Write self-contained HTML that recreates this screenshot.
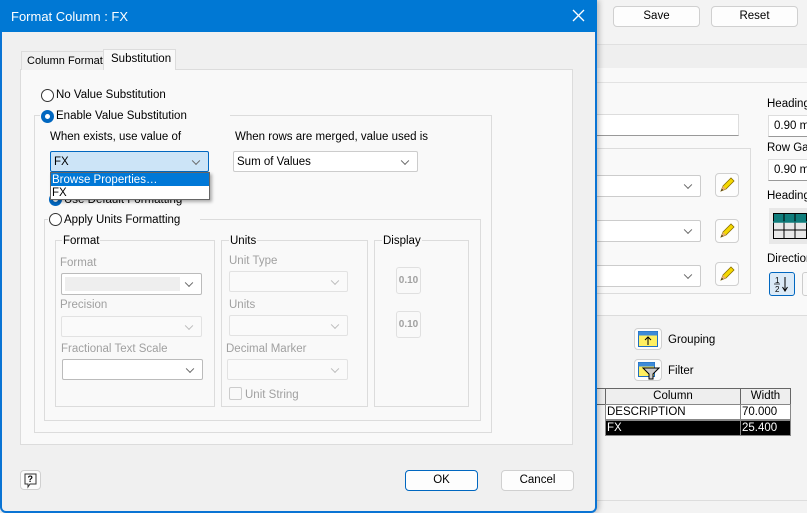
<!DOCTYPE html>
<html><head><style>
*{box-sizing:border-box;margin:0;padding:0;white-space:nowrap}
body{width:807px;height:513px;overflow:hidden;background:#f3f3f3;font-family:"Liberation Sans",sans-serif;font-size:11.5px;color:#000;position:relative}
.a{position:absolute}
.btn{position:absolute;background:#fdfdfd;border:1px solid #d0d0d0;border-radius:4px;text-align:center}
.dd{position:absolute;background:#fff;border:1px solid #ccc;border-radius:2px}
.dd:after{content:"";position:absolute;right:9px;top:50%;width:5px;height:5px;border-right:1px solid #666;border-bottom:1px solid #666;transform:translateY(-70%) rotate(45deg)}
.dis{border-color:#e2e2e2;background:#fafafa}
.dis:after{border-color:#bbb}
.gb{position:absolute;border:1px solid #dcdcdc}
.gt{position:absolute;background:#f9f9f9;padding:0 1px}
.radio{position:absolute;width:13px;height:13px;border:1px solid #333;border-radius:50%;background:#fff}
.radio.on{background:#0067c0;border-color:#0067c0}
.radio.on:after{content:"";position:absolute;left:3px;top:3px;width:5px;height:5px;border-radius:50%;background:#fff}
.g{color:#a0a0a0}
</style></head><body>
<svg width="0" height="0" style="position:absolute"><defs><g id="pen"><path d="M4 16L6 11L14 3L17 6L9 14Z" fill="#f5d800" stroke="#8a7000" stroke-width=".8"/><path d="M4 16L6 11L9 14Z" fill="#e8b070"/><path d="M4 16L5 14L6 15Z" fill="#000"/></g></defs></svg>
<div class="a" style="left:596px;top:0;width:211px;height:44px;background:#f3f3f3"></div>
<div class="btn" style="left:613px;top:6px;width:87px;height:21px;line-height:19px">Save</div>
<div class="btn" style="left:711px;top:6px;width:87px;height:21px;line-height:19px">Reset</div>
<div class="a" style="left:596px;top:44px;width:211px;height:1px;background:#e0e0e0"></div>
<div class="a" style="left:596px;top:45px;width:211px;height:23px;background:#efefef"></div>
<div class="a" style="left:596px;top:68px;width:211px;height:247px;background:#f9f9f9"></div>
<div class="a" style="left:596px;top:82px;width:211px;height:1px;background:#e3e3e3"></div>
<div class="a" style="left:596px;top:114px;width:143px;height:22px;background:#fff;border:1px solid #ddd;border-bottom-color:#999"></div>
<div class="gb" style="left:590px;top:148px;width:161px;height:146px"></div>
<div class="dd" style="left:590px;top:175px;width:111px;height:22px"></div>
<div class="dd" style="left:590px;top:220px;width:111px;height:22px"></div>
<div class="dd" style="left:590px;top:265px;width:111px;height:22px"></div>
<div class="btn" style="left:715px;top:173px;width:24px;height:24px"><svg width="20" height="20" style="margin-top:1px"><use href="#pen"/></svg></div>
<div class="btn" style="left:715px;top:219px;width:24px;height:24px"><svg width="20" height="20" style="margin-top:1px"><use href="#pen"/></svg></div>
<div class="btn" style="left:715px;top:262px;width:24px;height:24px"><svg width="20" height="20" style="margin-top:1px"><use href="#pen"/></svg></div>
<div class="a" style="left:767px;top:98px">Heading</div>
<div class="a" style="left:768px;top:115px;width:50px;height:22px;background:#fff;border:1px solid #ddd;border-bottom-color:#999;padding:4px 5px">0.90 m</div>
<div class="a" style="left:767px;top:142px">Row Gap</div>
<div class="a" style="left:768px;top:159px;width:50px;height:22px;background:#fff;border:1px solid #ddd;border-bottom-color:#999;padding:4px 5px">0.90 m</div>
<div class="a" style="left:767px;top:190px">Heading</div>
<div class="a" style="left:769px;top:208px;width:40px;height:36px;background:#e8e8e8"></div>
<svg class="a" style="left:773px;top:213px" width="34" height="27"><rect x="0.5" y="0.5" width="33" height="8" fill="#0e7c7b"/><rect x="0.5" y="0.5" width="33" height="25" fill="none" stroke="#000"/><path d="M11 0V26M22 0V26M0 17H34" stroke="#000"/><path d="M0 9H34" stroke="#0e7c7b" stroke-width="1.5"/></svg>
<div class="a" style="left:767px;top:253px">Direction</div>
<div class="a" style="left:769px;top:272px;width:26px;height:24px;background:#dbeaf7;border:1px solid #0067c0;border-radius:3px"><svg width="24" height="22"><text x="5" y="10" font-size="8" font-family="Liberation Sans">1</text><text x="5" y="19" font-size="8" font-family="Liberation Sans">2</text><path d="M4 11H10" stroke="#000" stroke-width=".7"/><path d="M15 4V17M12.5 14L15 18L17.5 14" stroke="#000" fill="none"/></svg></div>
<div class="a" style="left:802px;top:272px;width:10px;height:24px;border:1px solid #ccc;border-radius:3px"></div>
<div class="a" style="left:596px;top:315px;width:211px;height:1px;background:#dcdcdc"></div>
<div class="btn" style="left:634px;top:328px;width:28px;height:22px"></div>
<svg class="a" style="left:638px;top:331px" width="20" height="16"><rect x="0.5" y="0.5" width="19" height="15" fill="#ffef60" stroke="#1f6fc0"/><rect x="0.5" y="0.5" width="19" height="4" fill="#3d8ad8"/><path d="M10 14V6M7 9l3-3 3 3" stroke="#000" fill="none"/></svg>
<div class="a" style="left:668px;top:334px">Grouping</div>
<div class="btn" style="left:634px;top:359px;width:28px;height:22px"></div>
<svg class="a" style="left:638px;top:362px" width="22" height="18"><rect x="0.5" y="0.5" width="16" height="14" fill="#ffef60" stroke="#1f6fc0"/><rect x="0.5" y="0.5" width="16" height="4" fill="#3d8ad8"/><path d="M5 6H21L15 12V17H11V12Z" fill="#ccc" stroke="#000"/></svg>
<div class="a" style="left:668px;top:365px">Filter</div>
<div class="a" style="left:596px;top:388px;width:10px;height:17px;background:#eee;border:1px solid #666"></div>
<div class="a" style="left:605px;top:388px;width:136px;height:17px;background:#eee;border:1px solid #666;text-align:center;line-height:15px">Column</div>
<div class="a" style="left:740px;top:388px;width:51px;height:17px;background:#eee;border:1px solid #666;text-align:center;line-height:15px">Width</div>
<div class="a" style="left:605px;top:404px;width:136px;height:16px;background:#fff;border:1px solid #888;line-height:14px;padding-left:1px">DESCRIPTION</div>
<div class="a" style="left:740px;top:404px;width:51px;height:16px;background:#fff;border:1px solid #888;line-height:14px;padding-left:1px">70.000</div>
<div class="a" style="left:605px;top:420px;width:186px;height:16px;background:#000;border:1px solid #888"></div>
<div class="a" style="left:607px;top:422px;color:#fff;line-height:12px">FX</div>
<div class="a" style="left:742px;top:422px;color:#fff;line-height:12px">25.400</div>
<div class="a" style="left:740px;top:420px;width:1px;height:16px;background:#888"></div>
<div class="a" style="left:596px;top:500px;width:211px;height:1px;background:#ddd"></div>
<div class="a" style="left:0;top:0;width:597px;height:513px;background:#f0f0f0;border:2px solid #0a74d4;border-top:0;border-radius:0 0 6px 6px;box-shadow:2px 0 6px rgba(0,0,0,.25)"></div>
<div class="a" style="left:0;top:0;width:597px;height:32px;background:#0078d4;color:#fff;font-size:13px;padding:9px 11px">Format Column : FX</div>
<svg class="a" style="left:572px;top:9px" width="13" height="13"><path d="M1 1L12 12M12 1L1 12" stroke="#fff" stroke-width="1.3"/></svg>
<div class="a" style="left:20px;top:69px;width:553px;height:376px;background:#f9f9f9;border:1px solid #dcdcdc"></div>
<div class="a" style="left:21px;top:51px;width:83px;height:19px;background:#f0f0f0;border:1px solid #dcdcdc;border-bottom:0;padding:3px 5px;font-size:11px">Column Format</div>
<div class="a" style="left:103px;top:49px;width:73px;height:21px;background:#f9f9f9;border:1px solid #dcdcdc;border-bottom:0;padding:3px 7px">Substitution</div>
<div class="radio" style="left:41px;top:89px"></div>
<div class="a" style="left:56px;top:89px">No Value Substitution</div>
<div class="gb" style="left:34px;top:115px;width:458px;height:318px"></div>
<div class="a" style="left:40px;top:108px;width:190px;height:16px;background:#f9f9f9"></div>
<div class="radio on" style="left:41px;top:110px"></div>
<div class="a" style="left:56px;top:110px">Enable Value Substitution</div>
<div class="a" style="left:50px;top:131px">When exists, use value of</div>
<div class="a" style="left:235px;top:131px">When rows are merged, value used is</div>
<div class="dd" style="left:50px;top:151px;width:159px;height:21px;background:#cce4f7;border-color:#0067c0;padding:4px 3px">FX</div>
<div class="dd" style="left:233px;top:151px;width:185px;height:21px;padding:4px 3px">Sum of Values</div>
<div class="radio on" style="left:49px;top:193px"></div>
<div class="a" style="left:64px;top:194px">Use Default Formatting</div>
<div class="a" style="left:50px;top:172px;width:160px;height:28px;background:#fff;border:1px solid #666;box-shadow:2px 2px 3px rgba(0,0,0,.3)"></div>
<div class="a" style="left:51px;top:173px;width:158px;height:13px;background:#0078d7;color:#fff;line-height:14px;padding-left:1px">Browse Properties…</div>
<div class="a" style="left:51px;top:187px;line-height:13px;padding-left:1px">FX</div>
<div class="gb" style="left:44px;top:219px;width:437px;height:202px"></div>
<div class="a" style="left:48px;top:212px;width:152px;height:16px;background:#f9f9f9"></div>
<div class="radio" style="left:49px;top:213px"></div>
<div class="a" style="left:64px;top:214px">Apply Units Formatting</div>
<div class="gb" style="left:55px;top:240px;width:160px;height:167px"></div>
<div class="gt" style="left:62px;top:235px">Format</div>
<div class="a g" style="left:60px;top:257px">Format</div>
<div class="dd" style="left:61px;top:273px;width:141px;height:22px;border-color:#bbb"><div style="margin:3px;width:115px;height:14px;background:#eee"></div></div>
<div class="a g" style="left:60px;top:299px">Precision</div>
<div class="dd dis" style="left:61px;top:316px;width:141px;height:21px"></div>
<div class="a g" style="left:61px;top:343px">Fractional Text Scale</div>
<div class="dd" style="left:62px;top:359px;width:141px;height:21px;border-color:#bbb"></div>
<div class="gb" style="left:221px;top:240px;width:147px;height:167px"></div>
<div class="gt" style="left:229px;top:235px">Units</div>
<div class="a g" style="left:229px;top:255px">Unit Type</div>
<div class="dd dis" style="left:229px;top:271px;width:119px;height:21px"></div>
<div class="a g" style="left:229px;top:299px">Units</div>
<div class="dd dis" style="left:229px;top:315px;width:119px;height:21px"></div>
<div class="a g" style="left:226px;top:343px">Decimal Marker</div>
<div class="dd dis" style="left:227px;top:359px;width:121px;height:21px"></div>
<div class="a" style="left:229px;top:387px;width:13px;height:13px;border:1px solid #ccc;border-radius:2px"></div>
<div class="a g" style="left:245px;top:389px">Unit String</div>
<div class="gb" style="left:374px;top:240px;width:95px;height:167px"></div>
<div class="gt" style="left:382px;top:235px">Display</div>
<div class="a g" style="left:396px;top:267px;width:25px;height:27px;border:1px solid #e0e0e0;border-radius:3px;font-size:10px;font-weight:bold;text-align:center;line-height:25px">0.10</div>
<div class="a g" style="left:396px;top:311px;width:25px;height:27px;border:1px solid #e0e0e0;border-radius:3px;font-size:10px;font-weight:bold;text-align:center;line-height:25px">0.10</div>
<div class="btn" style="left:20px;top:470px;width:21px;height:20px"><svg width="19" height="18"><path d="M4 3H15V13H9L7 16V13H4Z" fill="none" stroke="#333"/><text x="6.5" y="11" font-size="9" font-weight="bold" font-family="Liberation Sans">?</text></svg></div>
<div class="btn" style="left:405px;top:470px;width:73px;height:21px;border-color:#0067c0;line-height:19px">OK</div>
<div class="btn" style="left:501px;top:470px;width:73px;height:21px;line-height:19px">Cancel</div>
</body></html>
